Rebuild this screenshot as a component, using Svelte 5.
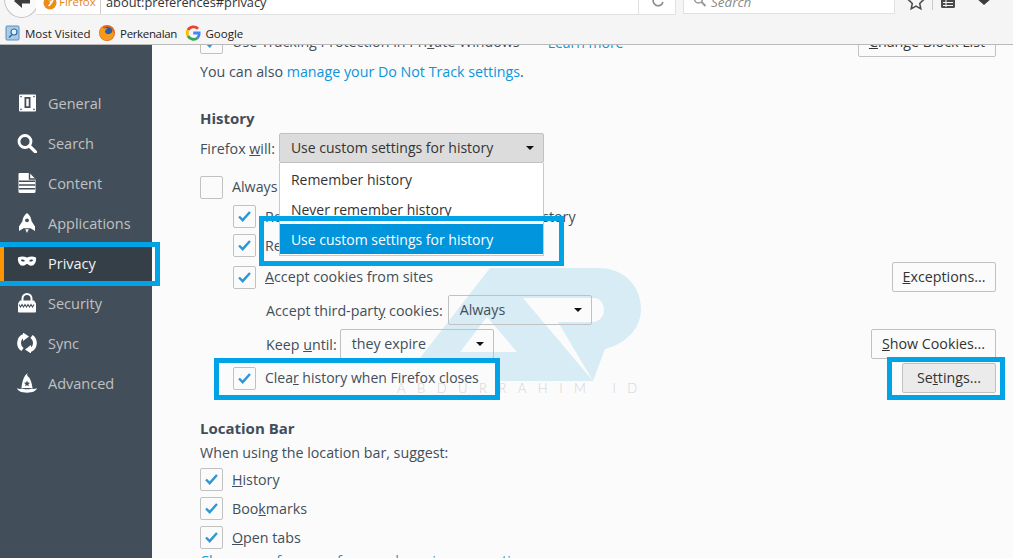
<script>
  const navItems = [
    { label: 'General', icon: general },
    { label: 'Search', icon: search },
    { label: 'Content', icon: content },
    { label: 'Applications', icon: applications },
    { label: 'Privacy', icon: privacy, active: true },
    { label: 'Security', icon: security },
    { label: 'Sync', icon: sync },
    { label: 'Advanced', icon: advanced }
  ];

  const historyOptions = ['Remember history', 'Never remember history', 'Use custom settings for history'];
</script>

{#snippet general()}
  <path fill="#fff" fill-rule="evenodd" d="M3 1.500h15a1 1 0 0 1 1 1v15a1 1 0 0 1-1 1H3a1 1 0 0 1-1-1v-15a1 1 0 0 1 1-1zM7.500 4v11h6V4zM9.300 5.800h2.400v7.400H9.300z"/>
  <g fill="#424f5a"><circle cx="4" cy="3.600" r=".8"/><circle cx="17" cy="3.600" r=".8"/><circle cx="4" cy="16.400" r=".8"/><circle cx="17" cy="16.400" r=".8"/></g>
{/snippet}
{#snippet search()}
  <circle cx="8" cy="8.500" r="6" fill="none" stroke="#fff" stroke-width="2.800"/>
  <path d="M12.500 13l6 6" stroke="#fff" stroke-width="3.200" stroke-linecap="round"/>
{/snippet}
{#snippet content()}
  <path fill="#fff" d="M2.500 0h10l6 6v12.500a1.500 1.500 0 0 1-1.500 1.500H3a1.500 1.500 0 0 1-1.500-1.500V1a1 1 0 0 1 1-1z"/>
  <path stroke="#424f5a" stroke-width="1.400" d="M2 8.200h16M2 12h16M2 15.800h16M12.500 0v6h6" fill="none"/>
{/snippet}
{#snippet applications()}
  <path fill="#fff" d="M10 0c2.900 2.200 4.300 5 4.600 8.200l3.400 5.300V18l-4.500-2.800h-7L2 18v-4.500l3.400-5.300C5.700 5 7.100 2.200 10 0z"/>
  <circle cx="10" cy="7.300" r="1.900" fill="#424f5a"/>
  <path fill="#fff" d="M8.300 16.200h3.400L10 20z"/>
{/snippet}
{#snippet privacy()}
  <path fill="#fff" fill-rule="evenodd" d="M1 4.500C4 3 7 3.200 10 4.500 13 3.200 16 3 19 4.500c.6 4.500-1.500 8.300-4.800 8.300-2 0-3-1.800-4.200-1.800s-2.200 1.800-4.200 1.800C2.500 12.800.4 9 1 4.500zM3.800 7c.8 1.600 2.800 2 4.200 1-.9-1.600-2.900-2-4.200-1zM16.200 7c-1.300-1-3.300-.6-4.200 1 1.400 1 3.400.6 4.200-1z"/>
{/snippet}
{#snippet security()}
  <path fill="none" stroke="#fff" stroke-width="2" d="M5.500 8V5.500a4.500 4.500 0 0 1 9 0V8"/>
  <path fill="#fff" d="M3 7.500h14l2 3v8a1 1 0 0 1-1 1H2a1 1 0 0 1-1-1v-8z"/>
  <path fill="none" stroke="#424f5a" stroke-width="1.100" d="M2 11.500l1.500 2.500 1.500-2.500 1.500 2.500 1.500-2.500 1.500 2.500 1.500-2.500 1.500 2.500 1.500-2.500 1.500 2.500 1.500-2.500"/>
{/snippet}
{#snippet sync()}
  <path fill="none" stroke="#fff" stroke-width="3.800" d="M5.500 16.500A7.800 7.800 0 0 1 7 2.800M14.500 3.500A7.800 7.800 0 0 1 13 17.200"/>
  <path fill="#fff" d="M6 -.5l6 4-6 4.500zM14 20.500l-6-4 6-4.500z"/>
{/snippet}
{#snippet advanced()}
  <path fill="#fff" d="M11 0c-1.500 1-1 3 .5 4 1.700 1.200 3.500 6 4 11H4.500C5 9 7 2 11 0z"/>
  <path fill="#424f5a" d="M10 7.500l.9 2 2.100.2-1.600 1.500.5 2.100-1.900-1.100-1.900 1.100.5-2.100-1.600-1.500 2.100-.2z"/>
  <path fill="#fff" d="M0 15.300c2.500 1 4 .7 5 .3 1.500 1 8.500 1 10 0 1 .4 2.500.7 5-.3-1 2.700-4 4.400-10 4.400s-9-1.700-10-4.400z"/>
{/snippet}
{#snippet check()}
  <svg class="tick" viewBox="0 0 23 23" width="21" height="21" aria-hidden="true">
    <path d="M5.500 11.500l4 4 8-9" fill="none" stroke="#2b97d6" stroke-width="2.600"/>
  </svg>
{/snippet}
{#snippet checkbox(checked)}
  <span class="box">
    {#if checked}{@render check()}{/if}
  </span>
{/snippet}
{#snippet caret()}
  <span class="caret"></span>
{/snippet}

<div class="page">
  <header class="chrome">
    <div class="navbar">
      <span class="back">
        <svg viewBox="0 0 20 20" width="20" height="20"><path d="M10 1L2 8l8 7v-4.500h8v-5h-8z" fill="#3c3c3c"/></svg>
      </span>
      <div class="urlbar">
        <svg class="ff-mini" viewBox="0 0 14 14" width="14" height="14"><circle cx="7" cy="7" r="6.500" fill="#f08a16"/><path d="M5 3.500h5l-1 2.500H7.500l.5 1.500L5.500 10" fill="none" stroke="#fff" stroke-width="1.600"/></svg>
        <span class="identity">Firefox</span>
        <span class="url">about:preferences#privacy</span>
        <span class="reload">
          <svg viewBox="0 0 14 14" width="14" height="14"><path d="M11 2.500A5 5 0 1 0 12 7" fill="none" stroke="#8a8a8a" stroke-width="1.600"/></svg>
        </span>
      </div>
      <div class="searchbar">
        <svg viewBox="0 0 14 14" width="14" height="14"><circle cx="5.500" cy="5" r="4" fill="none" stroke="#999" stroke-width="1.500"/><path d="M8.500 8l4 4" stroke="#999" stroke-width="2"/></svg>
        <span>Search</span>
      </div>
      <div class="tools">
        <svg viewBox="0 0 18 18" width="18" height="18"><path d="M9 1l2.300 5 5.400.7-4 3.700 1.100 5.400L9 13.100l-4.800 2.700 1.100-5.400-4-3.700L6.700 6z" fill="none" stroke="#4a4a4a" stroke-width="1.500"/></svg>
        <i class="sep"></i>
        <svg viewBox="0 0 16 16" width="16" height="16"><rect x="1" y="1" width="14" height="13" rx="1.500" fill="#4a4a4a"/><path d="M3 5.500h10M3 8.500h10M3 11.500h10M6 5v8" stroke="#f5f5f5" stroke-width="1"/></svg>
        <svg class="down" viewBox="0 0 18 18" width="18" height="18"><path d="M5 0h8v5h4l-8 7-8-7h4z" fill="#3c3c3c"/></svg>
      </div>
    </div>
    <div class="bookmarks">
      <span class="mark">
        <svg viewBox="0 0 16 16" width="16" height="16"><rect x="1" y="1" width="13" height="14" rx="1" fill="#a9cbe8" stroke="#5d8fba"/><circle cx="9" cy="7" r="3" fill="#e6f1fa" stroke="#2f6ea3" stroke-width="1.200"/><path d="M7 9.500l-3 3" stroke="#2f6ea3" stroke-width="1.600"/></svg>
        Most Visited
      </span>
      <span class="mark ff">
        <svg viewBox="0 0 16 16" width="16" height="16"><circle cx="8" cy="8" r="8" fill="#e8641b"/><circle cx="8.500" cy="7" r="5" fill="#2a5ea8"/><path d="M.5 8c0-3 1.500-5.500 3-6.500 0 1 .5 1.500 1.500 2 1-.5 2.500-.5 3.500 0C7.500 4.500 6 5 6 6.500c0 2 2.500 3 4.500 2.500 1.500-.4 3-1.500 2.800-3.500C14.500 7 15.500 9 14.500 11 13 14.500 9 16 5.500 15 2.500 14 .5 11 .5 8z" fill="#f59a1c"/></svg>
        Perkenalan
      </span>
      <span class="mark">
        <svg viewBox="0 0 16 16" width="16" height="16" fill="none" stroke-width="2.800"><path d="M13 3.700A6.300 6.300 0 0 0 3 5" stroke="#e94235"/><path d="M3 5a6.300 6.300 0 0 0 0 6" stroke="#fabb05"/><path d="M3 11a6.300 6.300 0 0 0 9.500 2" stroke="#34a853"/><path d="M12.500 13c1.300-1.200 1.900-2.800 1.700-5H8.200" stroke="#4285f4"/></svg>
        Google
      </span>
    </div>
  </header>

  <div class="body">
    <nav class="sidebar">
      {#each navItems as item}
        <div class="nav-item" class:active={item.active}>
          <svg class="nav-icon" viewBox="0 0 20 20" width="20" height="20" aria-hidden="true">{@render item.icon()}</svg>
          <span>{item.label}</span>
        </div>
      {/each}
    </nav>

    <main class="prefs">
      <svg class="watermark" viewBox="390 260 260 140" width="260" height="140" aria-hidden="true">
        <path fill="#d7ecf4" d="M420 358L490 268H598C625 268 641 287 641 309C641 329 625 344 605 349L593 381H500V358z"/>
        <path fill="#fbfbfb" d="M523 298H594C600 298 604 304 604 310C604 317 599 322 592 322H558L593 381zM487 317L517 352H460z"/>
        <text x="397" y="393">ABDURRAHIM ID</text>
      </svg>

      <div class="row tracking">
        {@render checkbox(true)}
        <span class="label">Use Tracking Protection in Pri<u>v</u>ate Windows</span>
        <a class="learn" href="#privacy">Learn more</a>
        <button class="btn change"><u>C</u>hange Block List</button>
      </div>
      <p class="also">You can also <a href="#privacy">manage your Do Not Track settings</a>.</p>

      <h2 class="history-title">History</h2>
      <div class="row will">
        <span>Firefox <u>w</u>ill:</span>
        <div class="select-wrap">
          <div class="select open">Use custom settings for history {@render caret()}</div>
          <ul class="menu">
            {#each historyOptions as option, i}
              <li class:selected={i === 2}>{option}</li>
            {/each}
          </ul>
        </div>
      </div>

      <div class="row always">
        {@render checkbox(false)}
        <span class="label">Always use private browsing mode</span>
      </div>
      <div class="row nested first">
        {@render checkbox(true)}
        <span class="label">Remember my browsing and download history</span>
      </div>
      <div class="row nested">
        {@render checkbox(true)}
        <span class="label">Remember search and form history</span>
      </div>
      <div class="row nested cookies">
        {@render checkbox(true)}
        <span class="label"><u>A</u>ccept cookies from sites</span>
        <button class="btn exceptions"><u>E</u>xceptions...</button>
      </div>
      <div class="row sub third">
        <span>Accept third-part<u>y</u> cookies:</span>
        <div class="select always-sel">Always {@render caret()}</div>
      </div>
      <div class="row sub keep">
        <span>Keep <u>u</u>ntil:</span>
        <div class="select expire">they expire {@render caret()}</div>
        <button class="btn cookies-btn">
          <u>S</u>how Cookies...
        </button>
      </div>
      <div class="row nested clear">
        {@render checkbox(true)}
        <span class="label clear-label">Clea<u>r</u> history when Firefox closes</span>
        <button class="btn settings">Se<u>t</u>tings...</button>
      </div>

      <h2 class="location-title">Location Bar</h2>
      <p class="suggest">When using the location bar, suggest:</p>
      <div class="options">
        <div class="row option">
          {@render checkbox(true)}
          <span class="label"><u>H</u>istory</span>
        </div>
        <div class="row option">
          {@render checkbox(true)}
          <span class="label">Boo<u>k</u>marks</span>
        </div>
        <div class="row option">
          {@render checkbox(true)}
          <span class="label"><u>O</u>pen tabs</span>
        </div>
      </div>
      <p class="engines"><a href="#privacy">Change preferences for search engine suggestions...</a></p>
    </main>
  </div>

  <div class="mark-box m-privacy"></div>
  <div class="mark-box m-custom"></div>
  <div class="mark-box m-clear"></div>
  <div class="mark-box m-settings"></div>
</div>

<style>
  :global(body) {
    margin: 0;
    overflow: hidden;
  }

  .page {
    position: relative;
    width: 1013px;
    height: 558px;
    overflow: hidden;
    font-family: "Open Sans", "Noto Sans", sans-serif;
    font-size: 14.25px;
    color: #424e5a;
    display: flex;
    flex-direction: column;
  }

  /* browser chrome */
  .chrome {
    height: 44px;
    flex: none;
    background: #f5f5f5;
    border-bottom: 1px solid #b9b9b9;
    position: relative;
    z-index: 3;
    overflow: hidden;
  }

  .navbar {
    height: 22px;
    display: flex;
    align-items: flex-end;
    position: relative;
  }

  .back {
    position: absolute;
    left: 4px;
    top: -20px;
    width: 33px;
    height: 36px;
    border: 1px solid #c4c4c4;
    border-radius: 50%;
    background: #fafafa;
    display: flex;
    align-items: flex-end;
    justify-content: center;
    box-sizing: content-box;
  }

  .back svg {
    margin-bottom: 4px;
  }

  .urlbar {
    margin-left: 36px;
    width: 639px;
    height: 14px;
    align-self: flex-start;
    background: #fff;
    border: 1px solid #e1e1e1;
    border-top: 0;
    border-left: 0;
    position: relative;
    line-height: 14px;
  }

  .ff-mini {
    position: absolute;
    left: 7px;
    top: -4px;
  }

  .identity {
    position: absolute;
    left: 23px;
    top: -5px;
    color: #e2851e;
    font-size: 11.5px;
  }

  .identity::after {
    content: "";
    position: absolute;
    left: 41px;
    top: 3px;
    height: 16px;
    width: 1px;
    background: #cfcfcf;
  }

  .url {
    position: absolute;
    left: 70px;
    top: -5px;
    color: #333;
    font-size: 12.8px;
    white-space: nowrap;
  }

  .reload {
    position: absolute;
    right: 10px;
    top: -5px;
    height: 14px;
  }

  .reload::before {
    content: "";
    position: absolute;
    left: -13px;
    top: 0;
    height: 19px;
    width: 1px;
    background: #e1e1e1;
  }

  .searchbar {
    margin-left: 7px;
    width: 212px;
    height: 14px;
    align-self: flex-start;
    background: #fff;
    border: 1px solid #e1e1e1;
    border-top: 0;
    display: flex;
    align-items: flex-end;
    gap: 4px;
    padding-left: 9px;
    box-sizing: border-box;
    font-size: 13.5px;
    font-style: italic;
    color: #8c8c8c;
    line-height: 14px;
    overflow: hidden;
  }

  .searchbar svg {
    flex: none;
    margin-bottom: 5px;
  }

  .searchbar span {
    margin-bottom: 4px;
  }

  .tools {
    position: absolute;
    left: 907px;
    top: -6px;
    display: flex;
    align-items: center;
    height: 16px;
  }

  .tools .sep {
    width: 1px;
    height: 16px;
    background: #c9c9c9;
    margin: 0 7px 0 7px;
  }

  .tools .down {
    margin-left: 19px;
  }

  .bookmarks {
    height: 22px;
    padding-left: 5px;
    display: flex;
    align-items: center;
    gap: 8.5px;
    font-size: 11.5px;
    color: #222;
  }

  .mark {
    display: flex;
    align-items: center;
    gap: 4px;
    white-space: nowrap;
  }

  .mark.ff {
    gap: 5px;
    letter-spacing: -0.35px;
  }

  /* preferences */
  .body {
    flex: 1;
    min-height: 0;
    display: flex;
  }

  .sidebar {
    width: 152px;
    flex: none;
    background: #424f5a;
    padding-top: 38px;
    box-sizing: border-box;
  }

  .nav-item {
    height: 40px;
    display: flex;
    align-items: center;
    gap: 11px;
    padding-left: 17px;
    color: #c1c1c1;
    font-size: 14.5px;
    box-sizing: border-box;
  }

  .nav-item.active {
    background: #343f48;
    color: #f2f2f2;
    border-left: 4px solid #ff9500;
    padding-left: 13px;
  }

  .nav-icon {
    flex: none;
  }

  .prefs {
    flex: 1;
    min-width: 0;
    position: relative;
    overflow: hidden;
    background: #fbfbfb;
    padding: 0 17px 0 48px;
  }

  .watermark {
    position: absolute;
    left: 238px;
    top: 215px;
  }

  .watermark text {
    font-family: "Lato", sans-serif;
    font-weight: 300;
    font-size: 13px;
    letter-spacing: 11.5px;
    fill: #d4d4d4;
  }

  .row {
    display: flex;
    align-items: center;
    position: relative;
    white-space: nowrap;
  }

  .box {
    width: 21px;
    height: 21px;
    border: 1px solid #c1c1c1;
    border-radius: 2px;
    background: #fbfbfb;
    flex: none;
    display: block;
    position: relative;
  }

  .tick {
    display: block;
  }

  .label {
    margin-left: 9px;
    padding-bottom: 1px;
  }

  .clear-label {
    font-size: 14px;
  }

  .tracking {
    height: 30px;
    margin-top: -18px;
  }

  .learn {
    margin-left: 28px;
    font-size: 14px;
  }

  a {
    color: #0a96dd;
    text-decoration: none;
  }

  p {
    margin: 0;
    position: relative;
    line-height: 20px;
  }

  .also {
    margin-top: 5px;
  }

  h2 {
    margin: 0;
    font-size: 15px;
    line-height: 20px;
    font-weight: 700;
    position: relative;
  }

  .history-title {
    margin-top: 26px;
  }

  .will {
    margin-top: 5px;
    height: 30px;
    gap: 4px;
    z-index: 2;
  }

  .select-wrap {
    position: relative;
    font-size: 14px;
  }

  .select {
    height: 28px;
    border: 1px solid #c1c1c1;
    border-radius: 2px;
    box-sizing: content-box;
    padding-left: 11px;
    display: flex;
    align-items: center;
    position: relative;
    line-height: 28px;
  }

  .select.open {
    width: 252px;
    background: #dcdcdc;
    color: #333;
  }

  .caret {
    position: absolute;
    right: 9px;
    top: 12px;
    border: 4px solid transparent;
    border-top: 4px solid #111;
    border-bottom: 0;
  }

  .menu {
    position: absolute;
    left: 0;
    top: 30px;
    width: 263px;
    margin: 0;
    padding: 1px 0;
    list-style: none;
    background: #fff;
    border: 1px solid #c9c9c9;
    border-top: 0;
    color: #333;
    box-sizing: content-box;
  }

  .menu li {
    height: 30px;
    line-height: 32px;
    padding-left: 11px;
  }

  .menu li.selected {
    background: #0095dd;
    color: #fff;
  }

  .always {
    margin-top: 10px;
    height: 28px;
  }

  .nested {
    margin-left: 33px;
    height: 29px;
  }

  .nested.first {
    margin-top: 1px;
  }

  .cookies {
    height: 30px;
    margin-top: 2px;
  }

  .sub {
    margin-left: 66px;
    height: 30px;
  }

  .third {
    margin-top: 3px;
    gap: 5px;
  }

  .keep {
    margin-top: 4px;
    gap: 3px;
  }

  .clear {
    margin-top: 4px;
    height: 30px;
  }

  .always-sel {
    width: 131px;
  }

  .expire {
    width: 141px;
  }

  .btn {
    height: 30px;
    padding: 0 0 2px;
    margin-left: auto;
    border: 1px solid #c1c1c1;
    border-radius: 2px;
    background: #fbfbfb;
    color: #333;
    font: inherit;
    box-sizing: border-box;
    text-align: center;
  }

  .change {
    width: 138px;
  }

  .exceptions {
    width: 104px;
  }

  .cookies-btn {
    width: 125px;
  }

  .settings {
    width: 94px;
    background: #ebebeb;
  }

  .location-title {
    margin-top: 25px;
  }

  .suggest {
    margin-top: 5px;
  }

  .options {
    margin-top: 2px;
  }

  .option {
    height: 29px;
  }

  .engines {
    margin-top: -1px;
  }

  /* annotation rectangles drawn over the screenshot */
  .mark-box {
    position: absolute;
    border: 5px solid #00a3e6;
    box-sizing: border-box;
    z-index: 4;
  }

  .m-privacy {
    left: -5px;
    top: 242px;
    width: 165px;
    height: 44px;
  }

  .m-custom {
    left: 259px;
    top: 216px;
    width: 305px;
    height: 50px;
  }

  .m-clear {
    left: 214px;
    top: 358px;
    width: 286px;
    height: 42px;
  }

  .m-settings {
    left: 887px;
    top: 357px;
    width: 118px;
    height: 43px;
  }
</style>
